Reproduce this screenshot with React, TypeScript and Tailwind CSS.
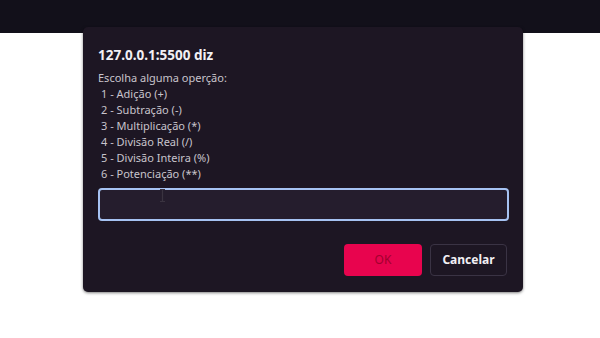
import React from 'react';

const options = [
  '1 - Adição (+)',
  '2 - Subtração (-)',
  '3 - Multiplicação (*)',
  '4 - Divisão Real (/)',
  '5 - Divisão Inteira (%)',
  '6 - Potenciação (**)',
];

export default function App() {
  return (
    <div className="relative h-[338px] w-[600px] overflow-hidden bg-white font-['Noto_Sans',sans-serif]">
      <div className="h-[33px] bg-[#12101a]" />

      {/* prompt dialog */}
      <div className="absolute left-[83px] top-[27px] flex h-[265px] w-[440px] flex-col rounded-[5px] bg-[#1d1623] px-[15px] pt-[18px] shadow-[0_1px_3px_rgba(0,0,0,0.5)]">
        <h1 className="text-[13.5px] leading-[20px] font-bold text-[#f2f0f4]">
          127.0.0.1:5500 diz
        </h1>
        <div className="mt-[5px] text-[11px] leading-[16px] text-[#c8c4cc]">
          <p>Escolha alguma operção:</p>
          {options.map((o) => (
            <p key={o} className="pl-[3px]">
              {o}
            </p>
          ))}
        </div>
        <div className="relative mt-[6px] h-[33px] w-[411px] rounded-[4px] border-2 border-[#a6c2f2] bg-[#251d2d]">
          {/* mouse text cursor */}
          <svg className="absolute left-[59px] top-[-1px]" width="7" height="13" viewBox="0 0 7 13">
            <path d="M1 0.5h5M3.5 0.5v12M1 12.5h5" stroke="#3a3340" strokeWidth="1.2" fill="none" />
          </svg>
        </div>
        <div className="mt-[23px] flex justify-end gap-[8px] pr-[1px]">
          <button className="h-[32px] w-[78px] rounded-[4px] bg-[#e8044e] text-[12px] text-[#a3002f]">
            OK
          </button>
          <button className="h-[32px] w-[77px] rounded-[4px] border border-[#3a3344] bg-[#1d1623] text-[12px] font-bold text-[#f2f0f4]">
            Cancelar
          </button>
        </div>
      </div>
    </div>
  );
}
